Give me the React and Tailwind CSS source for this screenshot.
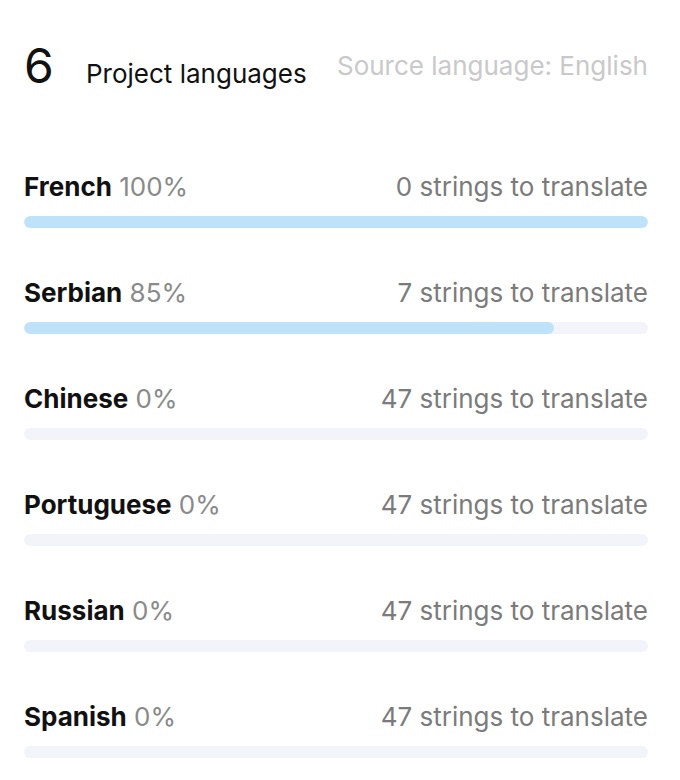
import React from "react";

const langs = [
  { name: "French", pct: 100, left: 0 },
  { name: "Serbian", pct: 85, left: 7 },
  { name: "Chinese", pct: 0, left: 47 },
  { name: "Portuguese", pct: 0, left: 47 },
  { name: "Russian", pct: 0, left: 47 },
  { name: "Spanish", pct: 0, left: 47 },
];

export default function App() {
  return (
    <div className="w-[680px] h-[780px] bg-white pl-6 pr-8 pt-[42px] font-['Inter',sans-serif]">
      <div className="flex items-start justify-between">
        <div className="flex items-start">
          <span className="text-[48px] leading-none text-[#111] w-[62px]">6</span>
          <span className="text-[26px] leading-none text-[#111] mt-[19px]">Project languages</span>
        </div>
        <span className="text-[26px] leading-none text-[#c9c9c9] mt-[11px]">Source language: English</span>
      </div>
      <div className="mt-[81px] flex flex-col gap-[49px]">
        {langs.map((l) => (
          <div key={l.name} className="flex flex-col">
            <div className="flex items-center justify-between h-[32px] text-[26px] leading-[32px]">
              <div>
                <span className="font-bold text-[#111]">{l.name}</span>{" "}
                <span className="text-[#8a8a8a]">{l.pct}%</span>
              </div>
              <span className="text-[#7b7b7b]">{l.left} strings to translate</span>
            </div>
            <div className="mt-[13px] h-[12px] rounded-full bg-[#f3f4fa] overflow-hidden">
              <div className="h-full rounded-full bg-[#bfe2fb]" style={{ width: `${l.pct}%` }} />
            </div>
          </div>
        ))}
      </div>
    </div>
  );
}
